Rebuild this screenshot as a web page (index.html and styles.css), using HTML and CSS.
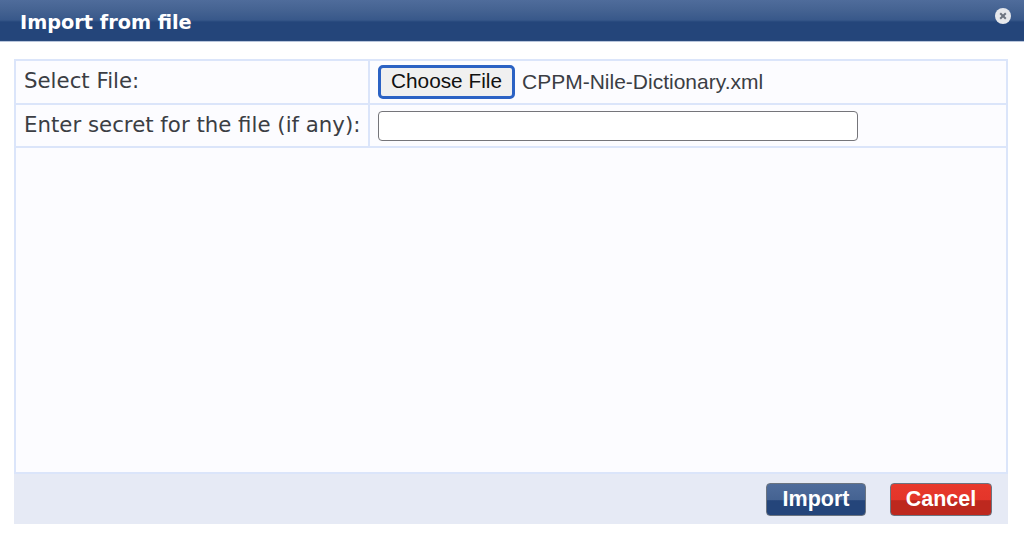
FILE: index.html
```html
<!DOCTYPE html>
<html lang="en">
<head>
<meta charset="utf-8">
<title>Import from file</title>
<link rel="stylesheet" href="styles.css">
</head>
<body>
<div class="dialog">
  <header class="titlebar">
    <h1 class="title">Import from file</h1>
    <svg class="close" viewBox="0 0 16 16" width="16" height="16" aria-label="Close">
      <circle cx="8" cy="8" r="8" fill="#e6e8ec"/>
      <path d="M5.2 5.2l5.6 5.6M10.8 5.2l-5.6 5.6" stroke="#6d7480" stroke-width="2" fill="none"/>
    </svg>
  </header>
  <main class="content">
    <div class="panel">
      <div class="row row-file">
        <div class="label-cell">Select File:</div>
        <div class="field-cell">
          <button class="choose" type="button">Choose File</button>
          <span class="filename">CPPM-Nile-Dictionary.xml</span>
        </div>
      </div>
      <div class="row row-secret">
        <div class="label-cell">Enter secret for the file (if any):</div>
        <div class="field-cell"><input class="secret" type="text"></div>
      </div>
      <div class="empty"></div>
    </div>
    <footer class="actions">
      <button class="btn btn-import" type="button">Import</button>
      <button class="btn btn-cancel" type="button">Cancel</button>
    </footer>
  </main>
</div>
</body>
</html>
```
FILE: styles.css
```css
* { box-sizing: border-box; }
html, body { margin: 0; height: 100%; background: #fff; overflow: hidden; }
.dialog {
  width: 1024px;
  height: 540px;
  display: flex;
  flex-direction: column;
  font-family: "DejaVu Sans", sans-serif;
  color: #3b3e44;
}
.titlebar {
  height: 42px;
  flex: none;
  display: flex;
  align-items: center;
  justify-content: space-between;
  padding: 0 13px 0 20px;
  background: linear-gradient(to bottom, #4f6c9b 0, #456392 10px, #38588a 20px, #24457a 22px, #24457a 40px, #2e4e80 41px);
  border-bottom: 1px solid #b9c6dc;
}
.title {
  margin: 0;
  padding-top: 3px;
  font-size: 19.3px;
  line-height: 39px;
  font-weight: 700;
  color: #fff;
}
.close { margin-bottom: 10px; flex: none; }
.content {
  flex: 1;
  display: flex;
  flex-direction: column;
  padding: 17px 16px 16px 14px;
}
.panel {
  flex: 1;
  display: flex;
  flex-direction: column;
  border: 2px solid #dbe5fa;
  background: #fcfcff;
}
.row {
  display: grid;
  grid-template-columns: 354px 1fr;
  flex: none;
  border-bottom: 2px solid #dbe5fa;
}
.row-file { height: 44px; }
.row-secret { height: 43px; }
.label-cell {
  border-right: 2px solid #dbe5fa;
  padding: 0 0 4px 8px;
  display: flex;
  align-items: center;
  font-size: 21.3px;
  white-space: nowrap;
}
.row-secret .label-cell { padding-bottom: 2px; }
.field-cell {
  display: flex;
  align-items: center;
  padding-left: 8px;
}
.choose {
  width: 137px;
  height: 34px;
  margin-bottom: 1px;
  padding: 0 0 1px;
  border: 3px solid #2b62c4;
  border-radius: 5px;
  background: #f0f0f0;
  color: #111;
  font-family: "Liberation Sans", sans-serif;
  font-size: 20.8px;
}
.filename {
  margin-left: 7px;
  margin-bottom: 1px;
  font-family: "Liberation Sans", sans-serif;
  font-size: 21px;
}
.secret {
  width: 480px;
  height: 30px;
  margin-top: 1px;
  border: 1.5px solid #75757a;
  border-radius: 4px;
  background: #fff;
}
.empty { flex: 1; }
.actions {
  height: 50px;
  flex: none;
  display: flex;
  justify-content: flex-end;
  align-items: center;
  gap: 24px;
  padding: 0 16px 0 0;
  background: #e6eaf5;
}
.btn {
  height: 33px;
  padding: 0;
  border: 1px solid #6b7480;
  border-radius: 4px;
  color: #fff;
  font-family: "Liberation Sans", sans-serif;
  font-size: 21.5px;
  font-weight: 700;
}
.btn-import {
  width: 100px;
  background: linear-gradient(to bottom, #4f6c9b 0, #456392 50%, #24457a 54%, #24457a 100%);
}
.btn-cancel {
  width: 102px;
  background: linear-gradient(to bottom, #e8392c 0, #e4352a 50%, #bd281e 54%, #bd281e 100%);
}
```
